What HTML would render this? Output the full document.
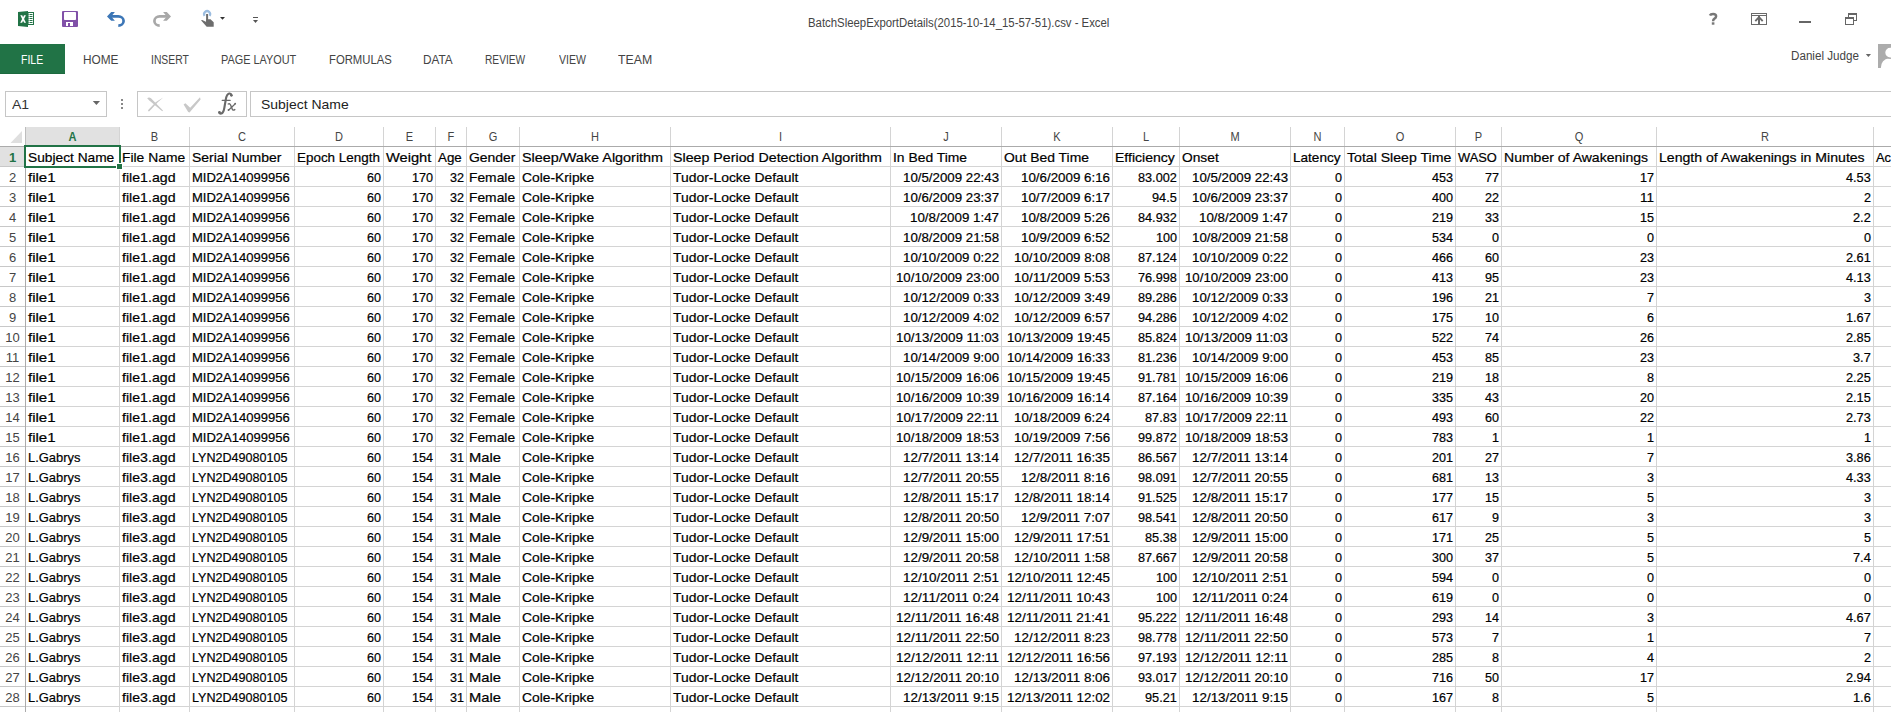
<!DOCTYPE html><html><head><meta charset="utf-8"><style>
*{margin:0;padding:0;box-sizing:border-box}
html,body{width:1891px;height:712px;overflow:hidden;background:#fff}
body{position:relative;font-family:"Liberation Sans",sans-serif;color:#000}
.a{position:absolute}
.t{position:absolute;white-space:nowrap;transform-origin:0 0}
.c{position:absolute;white-space:nowrap;font-size:13px;line-height:20px;height:20px;color:#000;transform-origin:0 0;-webkit-text-stroke:0.2px #000}
.r{text-align:right}
.v{position:absolute;width:1px;background:#d4d4d4}
.h{position:absolute;height:1px;background:#d4d4d4}
.ch{position:absolute;top:127px;height:19px;line-height:19px;text-align:center;font-size:13px;color:#444;transform:scaleX(0.85)}
.rn{position:absolute;left:0;width:25px;height:20px;line-height:20px;text-align:center;font-size:13px;color:#444}
.tab{position:absolute;top:53px;font-size:12px;line-height:14px;color:#444;white-space:nowrap;transform-origin:0 0}

</style></head><body>
<svg class="a" style="left:14px;top:6px" width="24" height="24" viewBox="0 0 24 24">
<rect x="14" y="6.5" width="5.5" height="12" fill="#fff" stroke="#217346" stroke-width="1"/>
<g fill="#217346"><rect x="15.5" y="8" width="3" height="1"/><rect x="15.5" y="10" width="3" height="1"/><rect x="15.5" y="12" width="3" height="1"/><rect x="15.5" y="14" width="3" height="1"/><rect x="15.5" y="16" width="3" height="1"/>
<rect x="13.5" y="8" width="1" height="1"/><rect x="13.5" y="10" width="1" height="1"/><rect x="13.5" y="12" width="1" height="1"/><rect x="13.5" y="14" width="1" height="1"/><rect x="13.5" y="16" width="1" height="1"/></g>
<path d="M4 6 L14 5 L14 21 L4 20 Z" fill="#217346"/>
<path d="M6.3 9.2 H8.2 L9.1 11.2 L10 9.2 H11.9 L10.1 12.9 L12 16.8 H10.1 L9.1 14.7 L8.1 16.8 H6.2 L8.1 12.9 Z" fill="#fff"/>
</svg>
<svg class="a" style="left:58px;top:6px" width="24" height="24" viewBox="0 0 24 24">
<path d="M4.5 5 H19 Q20 5 20 6 V20 Q20 21 19 21 H5 Q4 21 4 20 V6 Q4 5 5 5 Z" fill="#8151a8"/>
<rect x="6" y="6" width="12" height="8" rx="0.8" fill="#fff"/>
<path d="M8 16 H15 V20 H12 V17 H10 V20 H8 Z" fill="#fff"/>
</svg>
<svg class="a" style="left:104px;top:6px" width="24" height="24" viewBox="0 0 24 24">
<path d="M5.5 10.4 H14.3 A5.3 4.6 0 0 1 14.3 19.6" fill="none" stroke="#3d77b7" stroke-width="2.7"/>
<path d="M3 10.4 L7.2 6 H10.9 L7.2 10.4 L10.9 14.8 H7.2 Z" fill="#3d77b7"/>
</svg>
<svg class="a" style="left:150px;top:6px" width="24" height="24" viewBox="0 0 24 24"><g transform="translate(24,0) scale(-1,1)">
<path d="M5.5 10.4 H14.3 A5.3 4.6 0 0 1 14.3 19.6" fill="none" stroke="#a8a8a8" stroke-width="2.7"/>
<path d="M3 10.4 L7.2 6 H10.9 L7.2 10.4 L10.9 14.8 H7.2 Z" fill="#a8a8a8"/>
</g></svg>
<svg class="a" style="left:196px;top:6px" width="36" height="24" viewBox="0 0 36 24">
<path d="M8.6 9.8 A3 3 0 1 1 13.6 9.8" fill="none" stroke="#9cbde0" stroke-width="2.2"/>
<rect x="10.1" y="8" width="2" height="9" fill="#6d6d6d"/>
<path d="M5 14.3 L6.2 14 L10.4 16 V13.2 H14.5 L17.7 16.2 V20.7 H10.7 Z" fill="#6d6d6d"/>
<path d="M24 11 H29 L26.5 13.8 Z" fill="#333"/>
</svg>
<svg class="a" style="left:246px;top:10px" width="18" height="18" viewBox="0 0 18 18">
<rect x="7" y="7" width="5" height="1" fill="#555"/>
<path d="M7 10 H12 L9.5 13 Z" fill="#555"/>
</svg>
<div class="t" style="left:808.40px;top:15px;font-size:12px;line-height:17px;color:#444;transform:scaleX(0.9473);">BatchSleepExportDetails(2015-10-14_15-57-51).csv - Excel</div>
<svg class="a" style="left:1700px;top:6px" width="30" height="24" viewBox="0 0 30 24">
<path d="M9.9 9.6 Q10.6 8 13.1 8 Q16.1 8 16.1 10.3 Q16.1 11.8 14.5 12.7 Q13.1 13.5 13.1 15.2" fill="none" stroke="#777" stroke-width="2.5"/>
<rect x="11.8" y="16.3" width="2.6" height="2.4" fill="#777"/>
</svg>
<svg class="a" style="left:1746px;top:6px" width="30" height="24" viewBox="0 0 30 24">
<rect x="5.5" y="7.5" width="15" height="11" fill="none" stroke="#6a6a6a" stroke-width="1"/>
<rect x="5" y="9" width="16" height="1" fill="#6a6a6a"/>
<rect x="12" y="10" width="2" height="9" fill="#6a6a6a"/>
<path d="M9.3 15.1 L13 11.2 L16.7 15.1" fill="none" stroke="#6a6a6a" stroke-width="1.9"/>
</svg>
<div class="a" style="left:1799px;top:21px;width:12px;height:2px;background:#666"></div>
<div class="a" style="left:1848px;top:13px;width:9px;height:8px;border:1px solid #666;border-top:2px solid #666"></div>
<div class="a" style="left:1845px;top:17px;width:9px;height:8px;background:#fff;border:1px solid #666;border-top:2px solid #666"></div>
<div class="a" style="left:0;top:44px;width:65px;height:30px;background:#217346;border-bottom:1px solid #1d6a3f"></div>
<div class="t" style="left:21.00px;top:53px;font-size:12px;line-height:14px;color:#fff;transform:scaleX(0.8741);">FILE</div>
<div class="t" style="left:83.40px;top:53px;font-size:12px;line-height:14px;color:#444;transform:scaleX(0.9863);">HOME</div>
<div class="t" style="left:151.00px;top:53px;font-size:12px;line-height:14px;color:#444;transform:scaleX(0.8643);">INSERT</div>
<div class="t" style="left:221.40px;top:53px;font-size:12px;line-height:14px;color:#444;transform:scaleX(0.9073);">PAGE LAYOUT</div>
<div class="t" style="left:328.80px;top:53px;font-size:12px;line-height:14px;color:#444;transform:scaleX(0.9422);">FORMULAS</div>
<div class="t" style="left:423.40px;top:53px;font-size:12px;line-height:14px;color:#444;transform:scaleX(0.9830);">DATA</div>
<div class="t" style="left:485.40px;top:53px;font-size:12px;line-height:14px;color:#444;transform:scaleX(0.8496);">REVIEW</div>
<div class="t" style="left:559.40px;top:53px;font-size:12px;line-height:14px;color:#444;transform:scaleX(0.8795);">VIEW</div>
<div class="t" style="left:617.60px;top:53px;font-size:12px;line-height:14px;color:#444;transform:scaleX(1.0259);">TEAM</div>
<div class="t" style="left:1791.00px;top:49px;font-size:12px;line-height:14px;color:#444;transform:scaleX(0.9709);">Daniel Judge</div>
<svg class="a" style="left:1864px;top:52px" width="9" height="8" viewBox="0 0 9 8"><path d="M1.8 2 H7 L4.4 5 Z" fill="#666"/></svg>
<svg class="a" style="left:1878px;top:44px" width="13" height="24" viewBox="0 0 13 24">
<rect x="0" y="0" width="13" height="24" fill="#acacac"/>
<path d="M2.8 24 Q3.2 15.2 11 14.2 H13 V24 Z" fill="#fff"/>
<circle cx="12.2" cy="8.6" r="5.6" fill="#fff" stroke="#acacac" stroke-width="1.4"/>
</svg>
<div class="a" style="left:5px;top:91px;width:102px;height:26px;border:1px solid #c6c6c6"></div>
<div class="t" style="left:12.20px;top:96px;font-size:13px;line-height:17px;color:#333;transform:scaleX(1.0761);">A1</div>
<svg class="a" style="left:90px;top:98px" width="12" height="10" viewBox="0 0 12 10"><path d="M2.8 3 H10 L6.4 7 Z" fill="#666"/></svg>
<div class="a" style="left:121px;top:99px;width:2px;height:2px;background:#888"></div><div class="a" style="left:121px;top:103px;width:2px;height:2px;background:#888"></div><div class="a" style="left:121px;top:107px;width:2px;height:2px;background:#888"></div>
<div class="a" style="left:137px;top:91px;width:110px;height:26px;border:1px solid #c6c6c6"></div>
<svg class="a" style="left:137px;top:91px" width="110" height="26" viewBox="0 0 110 26">
<path d="M10.2 7.2 Q12 5.6 14 7.3 L25.7 19.2 L26 20.3 L24.6 19.8 L12.3 9.6 Z" fill="#c8c8c8"/>
<path d="M26.3 6.6 Q19 10.5 16.5 13.5 L11.2 19 Q10.6 20.3 12 20.4 Q14 18.9 17.5 14.8 Q21 10.8 26.3 6.6 Z" fill="#c8c8c8"/>
<path d="M46.6 13.5 L48.4 12.2 L53.2 16.8 L63 6.3 L63.6 8.4 L53.4 20.5 L52.6 21.6 L51.2 21 Z" fill="#c8c8c8"/>
</svg>
<svg class="a" style="left:210px;top:90px" width="36" height="28" viewBox="0 0 36 28">
<g fill="none" stroke="#6a6a6a" stroke-linecap="round">
<path d="M21.6 5.4 Q21.2 3.3 19.2 3.6 Q16.7 4.2 15.8 9.5 L14.3 18 Q13.5 22.8 11.3 23.6 Q9.8 24 9.3 22.6" stroke-width="2.1"/>
<path d="M12.2 10.4 H20.2" stroke-width="1.1"/>
<path d="M18.2 14 Q19.8 13 20.7 15.2 L22.3 19.2 Q23 20.9 24.8 19.6" stroke-width="1.4"/>
<path d="M25.3 13.7 L18.5 20.2" stroke-width="1.2"/>
</g>
<circle cx="21.3" cy="5.3" r="1.3" fill="#6a6a6a"/><circle cx="9.5" cy="22.4" r="1.3" fill="#6a6a6a"/>
<circle cx="25.2" cy="13.6" r="0.9" fill="#6a6a6a"/><circle cx="18.5" cy="20" r="0.9" fill="#6a6a6a"/>
</svg>
<div class="a" style="left:250px;top:91px;width:1700px;height:26px;border:1px solid #c6c6c6"></div>
<div class="t" style="left:261.00px;top:95px;font-size:13px;line-height:20px;color:#222;transform:scaleX(1.0735);">Subject Name</div>
<svg class="a" style="left:0;top:127px" width="25" height="19" viewBox="0 0 25 19"><path d="M10.5 16 L22 4 V16 Z" fill="#dfdfdf"/></svg>
<div class="a" style="left:26px;top:127px;width:93px;height:19px;background:#e1e1e1"></div>
<div class="a" style="left:0;top:147px;width:25px;height:19px;background:#e1e1e1"></div>
<div class="v" style="left:119px;top:127px;height:585px"></div>
<div class="v" style="left:189px;top:127px;height:585px"></div>
<div class="v" style="left:294px;top:127px;height:585px"></div>
<div class="v" style="left:383px;top:127px;height:585px"></div>
<div class="v" style="left:435px;top:127px;height:585px"></div>
<div class="v" style="left:466px;top:127px;height:585px"></div>
<div class="v" style="left:519px;top:127px;height:585px"></div>
<div class="v" style="left:670px;top:127px;height:585px"></div>
<div class="v" style="left:890px;top:127px;height:585px"></div>
<div class="v" style="left:1001px;top:127px;height:585px"></div>
<div class="v" style="left:1112px;top:127px;height:585px"></div>
<div class="v" style="left:1179px;top:127px;height:585px"></div>
<div class="v" style="left:1290px;top:127px;height:585px"></div>
<div class="v" style="left:1344px;top:127px;height:585px"></div>
<div class="v" style="left:1455px;top:127px;height:585px"></div>
<div class="v" style="left:1501px;top:127px;height:585px"></div>
<div class="v" style="left:1656px;top:127px;height:585px"></div>
<div class="v" style="left:1873px;top:127px;height:585px"></div>
<div class="h" style="left:26px;top:166px;width:1865px"></div>
<div class="h" style="left:0;top:166px;width:25px;background:#c8c8c8"></div>
<div class="h" style="left:26px;top:186px;width:1865px"></div>
<div class="h" style="left:0;top:186px;width:25px;background:#c8c8c8"></div>
<div class="h" style="left:26px;top:206px;width:1865px"></div>
<div class="h" style="left:0;top:206px;width:25px;background:#c8c8c8"></div>
<div class="h" style="left:26px;top:226px;width:1865px"></div>
<div class="h" style="left:0;top:226px;width:25px;background:#c8c8c8"></div>
<div class="h" style="left:26px;top:246px;width:1865px"></div>
<div class="h" style="left:0;top:246px;width:25px;background:#c8c8c8"></div>
<div class="h" style="left:26px;top:266px;width:1865px"></div>
<div class="h" style="left:0;top:266px;width:25px;background:#c8c8c8"></div>
<div class="h" style="left:26px;top:286px;width:1865px"></div>
<div class="h" style="left:0;top:286px;width:25px;background:#c8c8c8"></div>
<div class="h" style="left:26px;top:306px;width:1865px"></div>
<div class="h" style="left:0;top:306px;width:25px;background:#c8c8c8"></div>
<div class="h" style="left:26px;top:326px;width:1865px"></div>
<div class="h" style="left:0;top:326px;width:25px;background:#c8c8c8"></div>
<div class="h" style="left:26px;top:346px;width:1865px"></div>
<div class="h" style="left:0;top:346px;width:25px;background:#c8c8c8"></div>
<div class="h" style="left:26px;top:366px;width:1865px"></div>
<div class="h" style="left:0;top:366px;width:25px;background:#c8c8c8"></div>
<div class="h" style="left:26px;top:386px;width:1865px"></div>
<div class="h" style="left:0;top:386px;width:25px;background:#c8c8c8"></div>
<div class="h" style="left:26px;top:406px;width:1865px"></div>
<div class="h" style="left:0;top:406px;width:25px;background:#c8c8c8"></div>
<div class="h" style="left:26px;top:426px;width:1865px"></div>
<div class="h" style="left:0;top:426px;width:25px;background:#c8c8c8"></div>
<div class="h" style="left:26px;top:446px;width:1865px"></div>
<div class="h" style="left:0;top:446px;width:25px;background:#c8c8c8"></div>
<div class="h" style="left:26px;top:466px;width:1865px"></div>
<div class="h" style="left:0;top:466px;width:25px;background:#c8c8c8"></div>
<div class="h" style="left:26px;top:486px;width:1865px"></div>
<div class="h" style="left:0;top:486px;width:25px;background:#c8c8c8"></div>
<div class="h" style="left:26px;top:506px;width:1865px"></div>
<div class="h" style="left:0;top:506px;width:25px;background:#c8c8c8"></div>
<div class="h" style="left:26px;top:526px;width:1865px"></div>
<div class="h" style="left:0;top:526px;width:25px;background:#c8c8c8"></div>
<div class="h" style="left:26px;top:546px;width:1865px"></div>
<div class="h" style="left:0;top:546px;width:25px;background:#c8c8c8"></div>
<div class="h" style="left:26px;top:566px;width:1865px"></div>
<div class="h" style="left:0;top:566px;width:25px;background:#c8c8c8"></div>
<div class="h" style="left:26px;top:586px;width:1865px"></div>
<div class="h" style="left:0;top:586px;width:25px;background:#c8c8c8"></div>
<div class="h" style="left:26px;top:606px;width:1865px"></div>
<div class="h" style="left:0;top:606px;width:25px;background:#c8c8c8"></div>
<div class="h" style="left:26px;top:626px;width:1865px"></div>
<div class="h" style="left:0;top:626px;width:25px;background:#c8c8c8"></div>
<div class="h" style="left:26px;top:646px;width:1865px"></div>
<div class="h" style="left:0;top:646px;width:25px;background:#c8c8c8"></div>
<div class="h" style="left:26px;top:666px;width:1865px"></div>
<div class="h" style="left:0;top:666px;width:25px;background:#c8c8c8"></div>
<div class="h" style="left:26px;top:686px;width:1865px"></div>
<div class="h" style="left:0;top:686px;width:25px;background:#c8c8c8"></div>
<div class="h" style="left:26px;top:706px;width:1865px"></div>
<div class="h" style="left:0;top:706px;width:25px;background:#c8c8c8"></div>
<div class="a" style="left:0;top:146px;width:1891px;height:1px;background:#ababab"></div>
<div class="a" style="left:25px;top:146px;width:1px;height:566px;background:#ababab"></div><div class="a" style="left:25px;top:127px;width:1px;height:19px;background:#bdbdbd"></div>
<div class="ch" style="left:26px;width:93px;color:#217346;font-weight:bold">A</div>
<div class="ch" style="left:120px;width:69px">B</div>
<div class="ch" style="left:190px;width:104px">C</div>
<div class="ch" style="left:295px;width:88px">D</div>
<div class="ch" style="left:384px;width:51px">E</div>
<div class="ch" style="left:436px;width:30px">F</div>
<div class="ch" style="left:467px;width:52px">G</div>
<div class="ch" style="left:520px;width:150px">H</div>
<div class="ch" style="left:671px;width:219px">I</div>
<div class="ch" style="left:891px;width:110px">J</div>
<div class="ch" style="left:1002px;width:110px">K</div>
<div class="ch" style="left:1113px;width:66px">L</div>
<div class="ch" style="left:1180px;width:110px">M</div>
<div class="ch" style="left:1291px;width:53px">N</div>
<div class="ch" style="left:1345px;width:110px">O</div>
<div class="ch" style="left:1456px;width:45px">P</div>
<div class="ch" style="left:1502px;width:154px">Q</div>
<div class="ch" style="left:1657px;width:216px">R</div>
<div class="rn" style="top:148px;color:#217346;font-weight:bold">1</div>
<div class="rn" style="top:168px">2</div>
<div class="rn" style="top:188px">3</div>
<div class="rn" style="top:208px">4</div>
<div class="rn" style="top:228px">5</div>
<div class="rn" style="top:248px">6</div>
<div class="rn" style="top:268px">7</div>
<div class="rn" style="top:288px">8</div>
<div class="rn" style="top:308px">9</div>
<div class="rn" style="top:328px">10</div>
<div class="rn" style="top:348px">11</div>
<div class="rn" style="top:368px">12</div>
<div class="rn" style="top:388px">13</div>
<div class="rn" style="top:408px">14</div>
<div class="rn" style="top:428px">15</div>
<div class="rn" style="top:448px">16</div>
<div class="rn" style="top:468px">17</div>
<div class="rn" style="top:488px">18</div>
<div class="rn" style="top:508px">19</div>
<div class="rn" style="top:528px">20</div>
<div class="rn" style="top:548px">21</div>
<div class="rn" style="top:568px">22</div>
<div class="rn" style="top:588px">23</div>
<div class="rn" style="top:608px">24</div>
<div class="rn" style="top:628px">25</div>
<div class="rn" style="top:648px">26</div>
<div class="rn" style="top:668px">27</div>
<div class="rn" style="top:688px">28</div>
<div class="rn" style="top:708px">29</div>
<div class="c" style="left:27.50px;top:148px;transform:scaleX(1.0565)">Subject Name</div>
<div class="c" style="left:121.50px;top:148px;transform:scaleX(1.0658)">File Name</div>
<div class="c" style="left:191.50px;top:148px;transform:scaleX(1.0755)">Serial Number</div>
<div class="c" style="left:296.50px;top:148px;transform:scaleX(1.0331)">Epoch Length</div>
<div class="c" style="left:385.50px;top:148px;transform:scaleX(1.1265)">Weight</div>
<div class="c" style="left:437.50px;top:148px;transform:scaleX(1.0264)">Age</div>
<div class="c" style="left:468.50px;top:148px;transform:scaleX(1.0714)">Gender</div>
<div class="c" style="left:521.50px;top:148px;transform:scaleX(1.1074)">Sleep/Wake Algorithm</div>
<div class="c" style="left:672.50px;top:148px;transform:scaleX(1.0950)">Sleep Period Detection Algorithm</div>
<div class="c" style="left:892.50px;top:148px;transform:scaleX(1.0668)">In Bed Time</div>
<div class="c" style="left:1003.50px;top:148px;transform:scaleX(1.0689)">Out Bed Time</div>
<div class="c" style="left:1114.50px;top:148px;transform:scaleX(1.0802)">Efficiency</div>
<div class="c" style="left:1181.50px;top:148px;transform:scaleX(1.0583)">Onset</div>
<div class="c" style="left:1292.50px;top:148px;transform:scaleX(1.0439)">Latency</div>
<div class="c" style="left:1346.50px;top:148px;transform:scaleX(1.0851)">Total Sleep Time</div>
<div class="c" style="left:1457.50px;top:148px;transform:scaleX(0.9899)">WASO</div>
<div class="c" style="left:1503.50px;top:148px;transform:scaleX(1.0793)">Number of Awakenings</div>
<div class="c" style="left:1658.50px;top:148px;transform:scaleX(1.0834)">Length of Awakenings in Minutes</div>
<div class="c" style="left:1875.50px;top:148px;transform:scaleX(0.9902)">Ac</div>
<div class="c" style="left:27.50px;top:168px;transform:scaleX(1.1564)">file1</div>
<div class="c" style="left:121.50px;top:168px;transform:scaleX(1.0884)">file1.agd</div>
<div class="c" style="left:191.50px;top:168px;transform:scaleX(1.0017)">MID2A14099956</div>
<div class="c" style="left:367.00px;top:168px;transform:scaleX(0.9683)">60</div>
<div class="c" style="left:412.00px;top:168px;transform:scaleX(0.9683)">170</div>
<div class="c" style="left:450.00px;top:168px;transform:scaleX(0.9683)">32</div>
<div class="c" style="left:468.50px;top:168px;transform:scaleX(1.0626)">Female</div>
<div class="c" style="left:521.50px;top:168px;transform:scaleX(1.0635)">Cole-Kripke</div>
<div class="c" style="left:672.50px;top:168px;transform:scaleX(1.0697)">Tudor-Locke Default</div>
<div class="c" style="left:902.98px;top:168px;transform:scaleX(1.0219)">10/5/2009 22:43</div>
<div class="c" style="left:1020.98px;top:168px;transform:scaleX(1.0263)">10/6/2009 6:16</div>
<div class="c" style="left:1138.21px;top:168px;transform:scaleX(0.9756)">83.002</div>
<div class="c" style="left:1191.98px;top:168px;transform:scaleX(1.0219)">10/5/2009 22:43</div>
<div class="c" style="left:1335.00px;top:168px;transform:scaleX(0.9683)">0</div>
<div class="c" style="left:1432.00px;top:168px;transform:scaleX(0.9683)">453</div>
<div class="c" style="left:1485.00px;top:168px;transform:scaleX(0.9683)">77</div>
<div class="c" style="left:1640.00px;top:168px;transform:scaleX(0.9683)">17</div>
<div class="c" style="left:1846.21px;top:168px;transform:scaleX(0.9797)">4.53</div>
<div class="c" style="left:27.50px;top:188px;transform:scaleX(1.1564)">file1</div>
<div class="c" style="left:121.50px;top:188px;transform:scaleX(1.0884)">file1.agd</div>
<div class="c" style="left:191.50px;top:188px;transform:scaleX(1.0017)">MID2A14099956</div>
<div class="c" style="left:367.00px;top:188px;transform:scaleX(0.9683)">60</div>
<div class="c" style="left:412.00px;top:188px;transform:scaleX(0.9683)">170</div>
<div class="c" style="left:450.00px;top:188px;transform:scaleX(0.9683)">32</div>
<div class="c" style="left:468.50px;top:188px;transform:scaleX(1.0626)">Female</div>
<div class="c" style="left:521.50px;top:188px;transform:scaleX(1.0635)">Cole-Kripke</div>
<div class="c" style="left:672.50px;top:188px;transform:scaleX(1.0697)">Tudor-Locke Default</div>
<div class="c" style="left:902.98px;top:188px;transform:scaleX(1.0219)">10/6/2009 23:37</div>
<div class="c" style="left:1020.98px;top:188px;transform:scaleX(1.0263)">10/7/2009 6:17</div>
<div class="c" style="left:1152.21px;top:188px;transform:scaleX(0.9797)">94.5</div>
<div class="c" style="left:1191.98px;top:188px;transform:scaleX(1.0219)">10/6/2009 23:37</div>
<div class="c" style="left:1335.00px;top:188px;transform:scaleX(0.9683)">0</div>
<div class="c" style="left:1432.00px;top:188px;transform:scaleX(0.9683)">400</div>
<div class="c" style="left:1485.00px;top:188px;transform:scaleX(0.9683)">22</div>
<div class="c" style="left:1640.00px;top:188px;transform:scaleX(1.0375)">11</div>
<div class="c" style="left:1864.00px;top:188px;transform:scaleX(0.9683)">2</div>
<div class="c" style="left:27.50px;top:208px;transform:scaleX(1.1564)">file1</div>
<div class="c" style="left:121.50px;top:208px;transform:scaleX(1.0884)">file1.agd</div>
<div class="c" style="left:191.50px;top:208px;transform:scaleX(1.0017)">MID2A14099956</div>
<div class="c" style="left:367.00px;top:208px;transform:scaleX(0.9683)">60</div>
<div class="c" style="left:412.00px;top:208px;transform:scaleX(0.9683)">170</div>
<div class="c" style="left:450.00px;top:208px;transform:scaleX(0.9683)">32</div>
<div class="c" style="left:468.50px;top:208px;transform:scaleX(1.0626)">Female</div>
<div class="c" style="left:521.50px;top:208px;transform:scaleX(1.0635)">Cole-Kripke</div>
<div class="c" style="left:672.50px;top:208px;transform:scaleX(1.0697)">Tudor-Locke Default</div>
<div class="c" style="left:909.98px;top:208px;transform:scaleX(1.0263)">10/8/2009 1:47</div>
<div class="c" style="left:1020.98px;top:208px;transform:scaleX(1.0263)">10/8/2009 5:26</div>
<div class="c" style="left:1138.21px;top:208px;transform:scaleX(0.9756)">84.932</div>
<div class="c" style="left:1198.98px;top:208px;transform:scaleX(1.0263)">10/8/2009 1:47</div>
<div class="c" style="left:1335.00px;top:208px;transform:scaleX(0.9683)">0</div>
<div class="c" style="left:1432.00px;top:208px;transform:scaleX(0.9683)">219</div>
<div class="c" style="left:1485.00px;top:208px;transform:scaleX(0.9683)">33</div>
<div class="c" style="left:1640.00px;top:208px;transform:scaleX(0.9683)">15</div>
<div class="c" style="left:1853.21px;top:208px;transform:scaleX(0.9843)">2.2</div>
<div class="c" style="left:27.50px;top:228px;transform:scaleX(1.1564)">file1</div>
<div class="c" style="left:121.50px;top:228px;transform:scaleX(1.0884)">file1.agd</div>
<div class="c" style="left:191.50px;top:228px;transform:scaleX(1.0017)">MID2A14099956</div>
<div class="c" style="left:367.00px;top:228px;transform:scaleX(0.9683)">60</div>
<div class="c" style="left:412.00px;top:228px;transform:scaleX(0.9683)">170</div>
<div class="c" style="left:450.00px;top:228px;transform:scaleX(0.9683)">32</div>
<div class="c" style="left:468.50px;top:228px;transform:scaleX(1.0626)">Female</div>
<div class="c" style="left:521.50px;top:228px;transform:scaleX(1.0635)">Cole-Kripke</div>
<div class="c" style="left:672.50px;top:228px;transform:scaleX(1.0697)">Tudor-Locke Default</div>
<div class="c" style="left:902.98px;top:228px;transform:scaleX(1.0219)">10/8/2009 21:58</div>
<div class="c" style="left:1020.98px;top:228px;transform:scaleX(1.0263)">10/9/2009 6:52</div>
<div class="c" style="left:1156.00px;top:228px;transform:scaleX(0.9683)">100</div>
<div class="c" style="left:1191.98px;top:228px;transform:scaleX(1.0219)">10/8/2009 21:58</div>
<div class="c" style="left:1335.00px;top:228px;transform:scaleX(0.9683)">0</div>
<div class="c" style="left:1432.00px;top:228px;transform:scaleX(0.9683)">534</div>
<div class="c" style="left:1492.00px;top:228px;transform:scaleX(0.9683)">0</div>
<div class="c" style="left:1647.00px;top:228px;transform:scaleX(0.9683)">0</div>
<div class="c" style="left:1864.00px;top:228px;transform:scaleX(0.9683)">0</div>
<div class="c" style="left:27.50px;top:248px;transform:scaleX(1.1564)">file1</div>
<div class="c" style="left:121.50px;top:248px;transform:scaleX(1.0884)">file1.agd</div>
<div class="c" style="left:191.50px;top:248px;transform:scaleX(1.0017)">MID2A14099956</div>
<div class="c" style="left:367.00px;top:248px;transform:scaleX(0.9683)">60</div>
<div class="c" style="left:412.00px;top:248px;transform:scaleX(0.9683)">170</div>
<div class="c" style="left:450.00px;top:248px;transform:scaleX(0.9683)">32</div>
<div class="c" style="left:468.50px;top:248px;transform:scaleX(1.0626)">Female</div>
<div class="c" style="left:521.50px;top:248px;transform:scaleX(1.0635)">Cole-Kripke</div>
<div class="c" style="left:672.50px;top:248px;transform:scaleX(1.0697)">Tudor-Locke Default</div>
<div class="c" style="left:902.98px;top:248px;transform:scaleX(1.0219)">10/10/2009 0:22</div>
<div class="c" style="left:1013.98px;top:248px;transform:scaleX(1.0219)">10/10/2009 8:08</div>
<div class="c" style="left:1138.21px;top:248px;transform:scaleX(0.9756)">87.124</div>
<div class="c" style="left:1191.98px;top:248px;transform:scaleX(1.0219)">10/10/2009 0:22</div>
<div class="c" style="left:1335.00px;top:248px;transform:scaleX(0.9683)">0</div>
<div class="c" style="left:1432.00px;top:248px;transform:scaleX(0.9683)">466</div>
<div class="c" style="left:1485.00px;top:248px;transform:scaleX(0.9683)">60</div>
<div class="c" style="left:1640.00px;top:248px;transform:scaleX(0.9683)">23</div>
<div class="c" style="left:1846.21px;top:248px;transform:scaleX(0.9797)">2.61</div>
<div class="c" style="left:27.50px;top:268px;transform:scaleX(1.1564)">file1</div>
<div class="c" style="left:121.50px;top:268px;transform:scaleX(1.0884)">file1.agd</div>
<div class="c" style="left:191.50px;top:268px;transform:scaleX(1.0017)">MID2A14099956</div>
<div class="c" style="left:367.00px;top:268px;transform:scaleX(0.9683)">60</div>
<div class="c" style="left:412.00px;top:268px;transform:scaleX(0.9683)">170</div>
<div class="c" style="left:450.00px;top:268px;transform:scaleX(0.9683)">32</div>
<div class="c" style="left:468.50px;top:268px;transform:scaleX(1.0626)">Female</div>
<div class="c" style="left:521.50px;top:268px;transform:scaleX(1.0635)">Cole-Kripke</div>
<div class="c" style="left:672.50px;top:268px;transform:scaleX(1.0697)">Tudor-Locke Default</div>
<div class="c" style="left:895.98px;top:268px;transform:scaleX(1.0180)">10/10/2009 23:00</div>
<div class="c" style="left:1013.98px;top:268px;transform:scaleX(1.0325)">10/11/2009 5:53</div>
<div class="c" style="left:1138.21px;top:268px;transform:scaleX(0.9756)">76.998</div>
<div class="c" style="left:1184.98px;top:268px;transform:scaleX(1.0180)">10/10/2009 23:00</div>
<div class="c" style="left:1335.00px;top:268px;transform:scaleX(0.9683)">0</div>
<div class="c" style="left:1432.00px;top:268px;transform:scaleX(0.9683)">413</div>
<div class="c" style="left:1485.00px;top:268px;transform:scaleX(0.9683)">95</div>
<div class="c" style="left:1640.00px;top:268px;transform:scaleX(0.9683)">23</div>
<div class="c" style="left:1846.21px;top:268px;transform:scaleX(0.9797)">4.13</div>
<div class="c" style="left:27.50px;top:288px;transform:scaleX(1.1564)">file1</div>
<div class="c" style="left:121.50px;top:288px;transform:scaleX(1.0884)">file1.agd</div>
<div class="c" style="left:191.50px;top:288px;transform:scaleX(1.0017)">MID2A14099956</div>
<div class="c" style="left:367.00px;top:288px;transform:scaleX(0.9683)">60</div>
<div class="c" style="left:412.00px;top:288px;transform:scaleX(0.9683)">170</div>
<div class="c" style="left:450.00px;top:288px;transform:scaleX(0.9683)">32</div>
<div class="c" style="left:468.50px;top:288px;transform:scaleX(1.0626)">Female</div>
<div class="c" style="left:521.50px;top:288px;transform:scaleX(1.0635)">Cole-Kripke</div>
<div class="c" style="left:672.50px;top:288px;transform:scaleX(1.0697)">Tudor-Locke Default</div>
<div class="c" style="left:902.98px;top:288px;transform:scaleX(1.0219)">10/12/2009 0:33</div>
<div class="c" style="left:1013.98px;top:288px;transform:scaleX(1.0219)">10/12/2009 3:49</div>
<div class="c" style="left:1138.21px;top:288px;transform:scaleX(0.9756)">89.286</div>
<div class="c" style="left:1191.98px;top:288px;transform:scaleX(1.0219)">10/12/2009 0:33</div>
<div class="c" style="left:1335.00px;top:288px;transform:scaleX(0.9683)">0</div>
<div class="c" style="left:1432.00px;top:288px;transform:scaleX(0.9683)">196</div>
<div class="c" style="left:1485.00px;top:288px;transform:scaleX(0.9683)">21</div>
<div class="c" style="left:1647.00px;top:288px;transform:scaleX(0.9683)">7</div>
<div class="c" style="left:1864.00px;top:288px;transform:scaleX(0.9683)">3</div>
<div class="c" style="left:27.50px;top:308px;transform:scaleX(1.1564)">file1</div>
<div class="c" style="left:121.50px;top:308px;transform:scaleX(1.0884)">file1.agd</div>
<div class="c" style="left:191.50px;top:308px;transform:scaleX(1.0017)">MID2A14099956</div>
<div class="c" style="left:367.00px;top:308px;transform:scaleX(0.9683)">60</div>
<div class="c" style="left:412.00px;top:308px;transform:scaleX(0.9683)">170</div>
<div class="c" style="left:450.00px;top:308px;transform:scaleX(0.9683)">32</div>
<div class="c" style="left:468.50px;top:308px;transform:scaleX(1.0626)">Female</div>
<div class="c" style="left:521.50px;top:308px;transform:scaleX(1.0635)">Cole-Kripke</div>
<div class="c" style="left:672.50px;top:308px;transform:scaleX(1.0697)">Tudor-Locke Default</div>
<div class="c" style="left:902.98px;top:308px;transform:scaleX(1.0219)">10/12/2009 4:02</div>
<div class="c" style="left:1013.98px;top:308px;transform:scaleX(1.0219)">10/12/2009 6:57</div>
<div class="c" style="left:1138.21px;top:308px;transform:scaleX(0.9756)">94.286</div>
<div class="c" style="left:1191.98px;top:308px;transform:scaleX(1.0219)">10/12/2009 4:02</div>
<div class="c" style="left:1335.00px;top:308px;transform:scaleX(0.9683)">0</div>
<div class="c" style="left:1432.00px;top:308px;transform:scaleX(0.9683)">175</div>
<div class="c" style="left:1485.00px;top:308px;transform:scaleX(0.9683)">10</div>
<div class="c" style="left:1647.00px;top:308px;transform:scaleX(0.9683)">6</div>
<div class="c" style="left:1846.21px;top:308px;transform:scaleX(0.9797)">1.67</div>
<div class="c" style="left:27.50px;top:328px;transform:scaleX(1.1564)">file1</div>
<div class="c" style="left:121.50px;top:328px;transform:scaleX(1.0884)">file1.agd</div>
<div class="c" style="left:191.50px;top:328px;transform:scaleX(1.0017)">MID2A14099956</div>
<div class="c" style="left:367.00px;top:328px;transform:scaleX(0.9683)">60</div>
<div class="c" style="left:412.00px;top:328px;transform:scaleX(0.9683)">170</div>
<div class="c" style="left:450.00px;top:328px;transform:scaleX(0.9683)">32</div>
<div class="c" style="left:468.50px;top:328px;transform:scaleX(1.0626)">Female</div>
<div class="c" style="left:521.50px;top:328px;transform:scaleX(1.0635)">Cole-Kripke</div>
<div class="c" style="left:672.50px;top:328px;transform:scaleX(1.0697)">Tudor-Locke Default</div>
<div class="c" style="left:895.98px;top:328px;transform:scaleX(1.0278)">10/13/2009 11:03</div>
<div class="c" style="left:1006.98px;top:328px;transform:scaleX(1.0180)">10/13/2009 19:45</div>
<div class="c" style="left:1138.21px;top:328px;transform:scaleX(0.9756)">85.824</div>
<div class="c" style="left:1184.98px;top:328px;transform:scaleX(1.0278)">10/13/2009 11:03</div>
<div class="c" style="left:1335.00px;top:328px;transform:scaleX(0.9683)">0</div>
<div class="c" style="left:1432.00px;top:328px;transform:scaleX(0.9683)">522</div>
<div class="c" style="left:1485.00px;top:328px;transform:scaleX(0.9683)">74</div>
<div class="c" style="left:1640.00px;top:328px;transform:scaleX(0.9683)">26</div>
<div class="c" style="left:1846.21px;top:328px;transform:scaleX(0.9797)">2.85</div>
<div class="c" style="left:27.50px;top:348px;transform:scaleX(1.1564)">file1</div>
<div class="c" style="left:121.50px;top:348px;transform:scaleX(1.0884)">file1.agd</div>
<div class="c" style="left:191.50px;top:348px;transform:scaleX(1.0017)">MID2A14099956</div>
<div class="c" style="left:367.00px;top:348px;transform:scaleX(0.9683)">60</div>
<div class="c" style="left:412.00px;top:348px;transform:scaleX(0.9683)">170</div>
<div class="c" style="left:450.00px;top:348px;transform:scaleX(0.9683)">32</div>
<div class="c" style="left:468.50px;top:348px;transform:scaleX(1.0626)">Female</div>
<div class="c" style="left:521.50px;top:348px;transform:scaleX(1.0635)">Cole-Kripke</div>
<div class="c" style="left:672.50px;top:348px;transform:scaleX(1.0697)">Tudor-Locke Default</div>
<div class="c" style="left:902.98px;top:348px;transform:scaleX(1.0219)">10/14/2009 9:00</div>
<div class="c" style="left:1006.98px;top:348px;transform:scaleX(1.0180)">10/14/2009 16:33</div>
<div class="c" style="left:1138.21px;top:348px;transform:scaleX(0.9756)">81.236</div>
<div class="c" style="left:1191.98px;top:348px;transform:scaleX(1.0219)">10/14/2009 9:00</div>
<div class="c" style="left:1335.00px;top:348px;transform:scaleX(0.9683)">0</div>
<div class="c" style="left:1432.00px;top:348px;transform:scaleX(0.9683)">453</div>
<div class="c" style="left:1485.00px;top:348px;transform:scaleX(0.9683)">85</div>
<div class="c" style="left:1640.00px;top:348px;transform:scaleX(0.9683)">23</div>
<div class="c" style="left:1853.21px;top:348px;transform:scaleX(0.9843)">3.7</div>
<div class="c" style="left:27.50px;top:368px;transform:scaleX(1.1564)">file1</div>
<div class="c" style="left:121.50px;top:368px;transform:scaleX(1.0884)">file1.agd</div>
<div class="c" style="left:191.50px;top:368px;transform:scaleX(1.0017)">MID2A14099956</div>
<div class="c" style="left:367.00px;top:368px;transform:scaleX(0.9683)">60</div>
<div class="c" style="left:412.00px;top:368px;transform:scaleX(0.9683)">170</div>
<div class="c" style="left:450.00px;top:368px;transform:scaleX(0.9683)">32</div>
<div class="c" style="left:468.50px;top:368px;transform:scaleX(1.0626)">Female</div>
<div class="c" style="left:521.50px;top:368px;transform:scaleX(1.0635)">Cole-Kripke</div>
<div class="c" style="left:672.50px;top:368px;transform:scaleX(1.0697)">Tudor-Locke Default</div>
<div class="c" style="left:895.98px;top:368px;transform:scaleX(1.0180)">10/15/2009 16:06</div>
<div class="c" style="left:1006.98px;top:368px;transform:scaleX(1.0180)">10/15/2009 19:45</div>
<div class="c" style="left:1138.21px;top:368px;transform:scaleX(0.9756)">91.781</div>
<div class="c" style="left:1184.98px;top:368px;transform:scaleX(1.0180)">10/15/2009 16:06</div>
<div class="c" style="left:1335.00px;top:368px;transform:scaleX(0.9683)">0</div>
<div class="c" style="left:1432.00px;top:368px;transform:scaleX(0.9683)">219</div>
<div class="c" style="left:1485.00px;top:368px;transform:scaleX(0.9683)">18</div>
<div class="c" style="left:1647.00px;top:368px;transform:scaleX(0.9683)">8</div>
<div class="c" style="left:1846.21px;top:368px;transform:scaleX(0.9797)">2.25</div>
<div class="c" style="left:27.50px;top:388px;transform:scaleX(1.1564)">file1</div>
<div class="c" style="left:121.50px;top:388px;transform:scaleX(1.0884)">file1.agd</div>
<div class="c" style="left:191.50px;top:388px;transform:scaleX(1.0017)">MID2A14099956</div>
<div class="c" style="left:367.00px;top:388px;transform:scaleX(0.9683)">60</div>
<div class="c" style="left:412.00px;top:388px;transform:scaleX(0.9683)">170</div>
<div class="c" style="left:450.00px;top:388px;transform:scaleX(0.9683)">32</div>
<div class="c" style="left:468.50px;top:388px;transform:scaleX(1.0626)">Female</div>
<div class="c" style="left:521.50px;top:388px;transform:scaleX(1.0635)">Cole-Kripke</div>
<div class="c" style="left:672.50px;top:388px;transform:scaleX(1.0697)">Tudor-Locke Default</div>
<div class="c" style="left:895.98px;top:388px;transform:scaleX(1.0180)">10/16/2009 10:39</div>
<div class="c" style="left:1006.98px;top:388px;transform:scaleX(1.0180)">10/16/2009 16:14</div>
<div class="c" style="left:1138.21px;top:388px;transform:scaleX(0.9756)">87.164</div>
<div class="c" style="left:1184.98px;top:388px;transform:scaleX(1.0180)">10/16/2009 10:39</div>
<div class="c" style="left:1335.00px;top:388px;transform:scaleX(0.9683)">0</div>
<div class="c" style="left:1432.00px;top:388px;transform:scaleX(0.9683)">335</div>
<div class="c" style="left:1485.00px;top:388px;transform:scaleX(0.9683)">43</div>
<div class="c" style="left:1640.00px;top:388px;transform:scaleX(0.9683)">20</div>
<div class="c" style="left:1846.21px;top:388px;transform:scaleX(0.9797)">2.15</div>
<div class="c" style="left:27.50px;top:408px;transform:scaleX(1.1564)">file1</div>
<div class="c" style="left:121.50px;top:408px;transform:scaleX(1.0884)">file1.agd</div>
<div class="c" style="left:191.50px;top:408px;transform:scaleX(1.0017)">MID2A14099956</div>
<div class="c" style="left:367.00px;top:408px;transform:scaleX(0.9683)">60</div>
<div class="c" style="left:412.00px;top:408px;transform:scaleX(0.9683)">170</div>
<div class="c" style="left:450.00px;top:408px;transform:scaleX(0.9683)">32</div>
<div class="c" style="left:468.50px;top:408px;transform:scaleX(1.0626)">Female</div>
<div class="c" style="left:521.50px;top:408px;transform:scaleX(1.0635)">Cole-Kripke</div>
<div class="c" style="left:672.50px;top:408px;transform:scaleX(1.0697)">Tudor-Locke Default</div>
<div class="c" style="left:895.98px;top:408px;transform:scaleX(1.0278)">10/17/2009 22:11</div>
<div class="c" style="left:1013.98px;top:408px;transform:scaleX(1.0219)">10/18/2009 6:24</div>
<div class="c" style="left:1145.21px;top:408px;transform:scaleX(0.9772)">87.83</div>
<div class="c" style="left:1184.98px;top:408px;transform:scaleX(1.0278)">10/17/2009 22:11</div>
<div class="c" style="left:1335.00px;top:408px;transform:scaleX(0.9683)">0</div>
<div class="c" style="left:1432.00px;top:408px;transform:scaleX(0.9683)">493</div>
<div class="c" style="left:1485.00px;top:408px;transform:scaleX(0.9683)">60</div>
<div class="c" style="left:1640.00px;top:408px;transform:scaleX(0.9683)">22</div>
<div class="c" style="left:1846.21px;top:408px;transform:scaleX(0.9797)">2.73</div>
<div class="c" style="left:27.50px;top:428px;transform:scaleX(1.1564)">file1</div>
<div class="c" style="left:121.50px;top:428px;transform:scaleX(1.0884)">file1.agd</div>
<div class="c" style="left:191.50px;top:428px;transform:scaleX(1.0017)">MID2A14099956</div>
<div class="c" style="left:367.00px;top:428px;transform:scaleX(0.9683)">60</div>
<div class="c" style="left:412.00px;top:428px;transform:scaleX(0.9683)">170</div>
<div class="c" style="left:450.00px;top:428px;transform:scaleX(0.9683)">32</div>
<div class="c" style="left:468.50px;top:428px;transform:scaleX(1.0626)">Female</div>
<div class="c" style="left:521.50px;top:428px;transform:scaleX(1.0635)">Cole-Kripke</div>
<div class="c" style="left:672.50px;top:428px;transform:scaleX(1.0697)">Tudor-Locke Default</div>
<div class="c" style="left:895.98px;top:428px;transform:scaleX(1.0180)">10/18/2009 18:53</div>
<div class="c" style="left:1013.98px;top:428px;transform:scaleX(1.0219)">10/19/2009 7:56</div>
<div class="c" style="left:1138.21px;top:428px;transform:scaleX(0.9756)">99.872</div>
<div class="c" style="left:1184.98px;top:428px;transform:scaleX(1.0180)">10/18/2009 18:53</div>
<div class="c" style="left:1335.00px;top:428px;transform:scaleX(0.9683)">0</div>
<div class="c" style="left:1432.00px;top:428px;transform:scaleX(0.9683)">783</div>
<div class="c" style="left:1492.00px;top:428px;transform:scaleX(0.9683)">1</div>
<div class="c" style="left:1647.00px;top:428px;transform:scaleX(0.9683)">1</div>
<div class="c" style="left:1864.00px;top:428px;transform:scaleX(0.9683)">1</div>
<div class="c" style="left:27.50px;top:448px;transform:scaleX(0.9956)">L.Gabrys</div>
<div class="c" style="left:121.50px;top:448px;transform:scaleX(1.0884)">file3.agd</div>
<div class="c" style="left:191.50px;top:448px;transform:scaleX(0.9671)">LYN2D49080105</div>
<div class="c" style="left:367.00px;top:448px;transform:scaleX(0.9683)">60</div>
<div class="c" style="left:412.00px;top:448px;transform:scaleX(0.9683)">154</div>
<div class="c" style="left:450.00px;top:448px;transform:scaleX(0.9683)">31</div>
<div class="c" style="left:468.50px;top:448px;transform:scaleX(1.1361)">Male</div>
<div class="c" style="left:521.50px;top:448px;transform:scaleX(1.0635)">Cole-Kripke</div>
<div class="c" style="left:672.50px;top:448px;transform:scaleX(1.0697)">Tudor-Locke Default</div>
<div class="c" style="left:902.98px;top:448px;transform:scaleX(1.0325)">12/7/2011 13:14</div>
<div class="c" style="left:1013.98px;top:448px;transform:scaleX(1.0325)">12/7/2011 16:35</div>
<div class="c" style="left:1138.21px;top:448px;transform:scaleX(0.9756)">86.567</div>
<div class="c" style="left:1191.98px;top:448px;transform:scaleX(1.0325)">12/7/2011 13:14</div>
<div class="c" style="left:1335.00px;top:448px;transform:scaleX(0.9683)">0</div>
<div class="c" style="left:1432.00px;top:448px;transform:scaleX(0.9683)">201</div>
<div class="c" style="left:1485.00px;top:448px;transform:scaleX(0.9683)">27</div>
<div class="c" style="left:1647.00px;top:448px;transform:scaleX(0.9683)">7</div>
<div class="c" style="left:1846.21px;top:448px;transform:scaleX(0.9797)">3.86</div>
<div class="c" style="left:27.50px;top:468px;transform:scaleX(0.9956)">L.Gabrys</div>
<div class="c" style="left:121.50px;top:468px;transform:scaleX(1.0884)">file3.agd</div>
<div class="c" style="left:191.50px;top:468px;transform:scaleX(0.9671)">LYN2D49080105</div>
<div class="c" style="left:367.00px;top:468px;transform:scaleX(0.9683)">60</div>
<div class="c" style="left:412.00px;top:468px;transform:scaleX(0.9683)">154</div>
<div class="c" style="left:450.00px;top:468px;transform:scaleX(0.9683)">31</div>
<div class="c" style="left:468.50px;top:468px;transform:scaleX(1.1361)">Male</div>
<div class="c" style="left:521.50px;top:468px;transform:scaleX(1.0635)">Cole-Kripke</div>
<div class="c" style="left:672.50px;top:468px;transform:scaleX(1.0697)">Tudor-Locke Default</div>
<div class="c" style="left:902.98px;top:468px;transform:scaleX(1.0325)">12/7/2011 20:55</div>
<div class="c" style="left:1020.98px;top:468px;transform:scaleX(1.0379)">12/8/2011 8:16</div>
<div class="c" style="left:1138.21px;top:468px;transform:scaleX(0.9756)">98.091</div>
<div class="c" style="left:1191.98px;top:468px;transform:scaleX(1.0325)">12/7/2011 20:55</div>
<div class="c" style="left:1335.00px;top:468px;transform:scaleX(0.9683)">0</div>
<div class="c" style="left:1432.00px;top:468px;transform:scaleX(0.9683)">681</div>
<div class="c" style="left:1485.00px;top:468px;transform:scaleX(0.9683)">13</div>
<div class="c" style="left:1647.00px;top:468px;transform:scaleX(0.9683)">3</div>
<div class="c" style="left:1846.21px;top:468px;transform:scaleX(0.9797)">4.33</div>
<div class="c" style="left:27.50px;top:488px;transform:scaleX(0.9956)">L.Gabrys</div>
<div class="c" style="left:121.50px;top:488px;transform:scaleX(1.0884)">file3.agd</div>
<div class="c" style="left:191.50px;top:488px;transform:scaleX(0.9671)">LYN2D49080105</div>
<div class="c" style="left:367.00px;top:488px;transform:scaleX(0.9683)">60</div>
<div class="c" style="left:412.00px;top:488px;transform:scaleX(0.9683)">154</div>
<div class="c" style="left:450.00px;top:488px;transform:scaleX(0.9683)">31</div>
<div class="c" style="left:468.50px;top:488px;transform:scaleX(1.1361)">Male</div>
<div class="c" style="left:521.50px;top:488px;transform:scaleX(1.0635)">Cole-Kripke</div>
<div class="c" style="left:672.50px;top:488px;transform:scaleX(1.0697)">Tudor-Locke Default</div>
<div class="c" style="left:902.98px;top:488px;transform:scaleX(1.0325)">12/8/2011 15:17</div>
<div class="c" style="left:1013.98px;top:488px;transform:scaleX(1.0325)">12/8/2011 18:14</div>
<div class="c" style="left:1138.21px;top:488px;transform:scaleX(0.9756)">91.525</div>
<div class="c" style="left:1191.98px;top:488px;transform:scaleX(1.0325)">12/8/2011 15:17</div>
<div class="c" style="left:1335.00px;top:488px;transform:scaleX(0.9683)">0</div>
<div class="c" style="left:1432.00px;top:488px;transform:scaleX(0.9683)">177</div>
<div class="c" style="left:1485.00px;top:488px;transform:scaleX(0.9683)">15</div>
<div class="c" style="left:1647.00px;top:488px;transform:scaleX(0.9683)">5</div>
<div class="c" style="left:1864.00px;top:488px;transform:scaleX(0.9683)">3</div>
<div class="c" style="left:27.50px;top:508px;transform:scaleX(0.9956)">L.Gabrys</div>
<div class="c" style="left:121.50px;top:508px;transform:scaleX(1.0884)">file3.agd</div>
<div class="c" style="left:191.50px;top:508px;transform:scaleX(0.9671)">LYN2D49080105</div>
<div class="c" style="left:367.00px;top:508px;transform:scaleX(0.9683)">60</div>
<div class="c" style="left:412.00px;top:508px;transform:scaleX(0.9683)">154</div>
<div class="c" style="left:450.00px;top:508px;transform:scaleX(0.9683)">31</div>
<div class="c" style="left:468.50px;top:508px;transform:scaleX(1.1361)">Male</div>
<div class="c" style="left:521.50px;top:508px;transform:scaleX(1.0635)">Cole-Kripke</div>
<div class="c" style="left:672.50px;top:508px;transform:scaleX(1.0697)">Tudor-Locke Default</div>
<div class="c" style="left:902.98px;top:508px;transform:scaleX(1.0325)">12/8/2011 20:50</div>
<div class="c" style="left:1020.98px;top:508px;transform:scaleX(1.0379)">12/9/2011 7:07</div>
<div class="c" style="left:1138.21px;top:508px;transform:scaleX(0.9756)">98.541</div>
<div class="c" style="left:1191.98px;top:508px;transform:scaleX(1.0325)">12/8/2011 20:50</div>
<div class="c" style="left:1335.00px;top:508px;transform:scaleX(0.9683)">0</div>
<div class="c" style="left:1432.00px;top:508px;transform:scaleX(0.9683)">617</div>
<div class="c" style="left:1492.00px;top:508px;transform:scaleX(0.9683)">9</div>
<div class="c" style="left:1647.00px;top:508px;transform:scaleX(0.9683)">3</div>
<div class="c" style="left:1864.00px;top:508px;transform:scaleX(0.9683)">3</div>
<div class="c" style="left:27.50px;top:528px;transform:scaleX(0.9956)">L.Gabrys</div>
<div class="c" style="left:121.50px;top:528px;transform:scaleX(1.0884)">file3.agd</div>
<div class="c" style="left:191.50px;top:528px;transform:scaleX(0.9671)">LYN2D49080105</div>
<div class="c" style="left:367.00px;top:528px;transform:scaleX(0.9683)">60</div>
<div class="c" style="left:412.00px;top:528px;transform:scaleX(0.9683)">154</div>
<div class="c" style="left:450.00px;top:528px;transform:scaleX(0.9683)">31</div>
<div class="c" style="left:468.50px;top:528px;transform:scaleX(1.1361)">Male</div>
<div class="c" style="left:521.50px;top:528px;transform:scaleX(1.0635)">Cole-Kripke</div>
<div class="c" style="left:672.50px;top:528px;transform:scaleX(1.0697)">Tudor-Locke Default</div>
<div class="c" style="left:902.98px;top:528px;transform:scaleX(1.0325)">12/9/2011 15:00</div>
<div class="c" style="left:1013.98px;top:528px;transform:scaleX(1.0325)">12/9/2011 17:51</div>
<div class="c" style="left:1145.21px;top:528px;transform:scaleX(0.9772)">85.38</div>
<div class="c" style="left:1191.98px;top:528px;transform:scaleX(1.0325)">12/9/2011 15:00</div>
<div class="c" style="left:1335.00px;top:528px;transform:scaleX(0.9683)">0</div>
<div class="c" style="left:1432.00px;top:528px;transform:scaleX(0.9683)">171</div>
<div class="c" style="left:1485.00px;top:528px;transform:scaleX(0.9683)">25</div>
<div class="c" style="left:1647.00px;top:528px;transform:scaleX(0.9683)">5</div>
<div class="c" style="left:1864.00px;top:528px;transform:scaleX(0.9683)">5</div>
<div class="c" style="left:27.50px;top:548px;transform:scaleX(0.9956)">L.Gabrys</div>
<div class="c" style="left:121.50px;top:548px;transform:scaleX(1.0884)">file3.agd</div>
<div class="c" style="left:191.50px;top:548px;transform:scaleX(0.9671)">LYN2D49080105</div>
<div class="c" style="left:367.00px;top:548px;transform:scaleX(0.9683)">60</div>
<div class="c" style="left:412.00px;top:548px;transform:scaleX(0.9683)">154</div>
<div class="c" style="left:450.00px;top:548px;transform:scaleX(0.9683)">31</div>
<div class="c" style="left:468.50px;top:548px;transform:scaleX(1.1361)">Male</div>
<div class="c" style="left:521.50px;top:548px;transform:scaleX(1.0635)">Cole-Kripke</div>
<div class="c" style="left:672.50px;top:548px;transform:scaleX(1.0697)">Tudor-Locke Default</div>
<div class="c" style="left:902.98px;top:548px;transform:scaleX(1.0325)">12/9/2011 20:58</div>
<div class="c" style="left:1013.98px;top:548px;transform:scaleX(1.0325)">12/10/2011 1:58</div>
<div class="c" style="left:1138.21px;top:548px;transform:scaleX(0.9756)">87.667</div>
<div class="c" style="left:1191.98px;top:548px;transform:scaleX(1.0325)">12/9/2011 20:58</div>
<div class="c" style="left:1335.00px;top:548px;transform:scaleX(0.9683)">0</div>
<div class="c" style="left:1432.00px;top:548px;transform:scaleX(0.9683)">300</div>
<div class="c" style="left:1485.00px;top:548px;transform:scaleX(0.9683)">37</div>
<div class="c" style="left:1647.00px;top:548px;transform:scaleX(0.9683)">5</div>
<div class="c" style="left:1853.21px;top:548px;transform:scaleX(0.9843)">7.4</div>
<div class="c" style="left:27.50px;top:568px;transform:scaleX(0.9956)">L.Gabrys</div>
<div class="c" style="left:121.50px;top:568px;transform:scaleX(1.0884)">file3.agd</div>
<div class="c" style="left:191.50px;top:568px;transform:scaleX(0.9671)">LYN2D49080105</div>
<div class="c" style="left:367.00px;top:568px;transform:scaleX(0.9683)">60</div>
<div class="c" style="left:412.00px;top:568px;transform:scaleX(0.9683)">154</div>
<div class="c" style="left:450.00px;top:568px;transform:scaleX(0.9683)">31</div>
<div class="c" style="left:468.50px;top:568px;transform:scaleX(1.1361)">Male</div>
<div class="c" style="left:521.50px;top:568px;transform:scaleX(1.0635)">Cole-Kripke</div>
<div class="c" style="left:672.50px;top:568px;transform:scaleX(1.0697)">Tudor-Locke Default</div>
<div class="c" style="left:902.98px;top:568px;transform:scaleX(1.0325)">12/10/2011 2:51</div>
<div class="c" style="left:1006.98px;top:568px;transform:scaleX(1.0278)">12/10/2011 12:45</div>
<div class="c" style="left:1156.00px;top:568px;transform:scaleX(0.9683)">100</div>
<div class="c" style="left:1191.98px;top:568px;transform:scaleX(1.0325)">12/10/2011 2:51</div>
<div class="c" style="left:1335.00px;top:568px;transform:scaleX(0.9683)">0</div>
<div class="c" style="left:1432.00px;top:568px;transform:scaleX(0.9683)">594</div>
<div class="c" style="left:1492.00px;top:568px;transform:scaleX(0.9683)">0</div>
<div class="c" style="left:1647.00px;top:568px;transform:scaleX(0.9683)">0</div>
<div class="c" style="left:1864.00px;top:568px;transform:scaleX(0.9683)">0</div>
<div class="c" style="left:27.50px;top:588px;transform:scaleX(0.9956)">L.Gabrys</div>
<div class="c" style="left:121.50px;top:588px;transform:scaleX(1.0884)">file3.agd</div>
<div class="c" style="left:191.50px;top:588px;transform:scaleX(0.9671)">LYN2D49080105</div>
<div class="c" style="left:367.00px;top:588px;transform:scaleX(0.9683)">60</div>
<div class="c" style="left:412.00px;top:588px;transform:scaleX(0.9683)">154</div>
<div class="c" style="left:450.00px;top:588px;transform:scaleX(0.9683)">31</div>
<div class="c" style="left:468.50px;top:588px;transform:scaleX(1.1361)">Male</div>
<div class="c" style="left:521.50px;top:588px;transform:scaleX(1.0635)">Cole-Kripke</div>
<div class="c" style="left:672.50px;top:588px;transform:scaleX(1.0697)">Tudor-Locke Default</div>
<div class="c" style="left:902.98px;top:588px;transform:scaleX(1.0433)">12/11/2011 0:24</div>
<div class="c" style="left:1006.98px;top:588px;transform:scaleX(1.0378)">12/11/2011 10:43</div>
<div class="c" style="left:1156.00px;top:588px;transform:scaleX(0.9683)">100</div>
<div class="c" style="left:1191.98px;top:588px;transform:scaleX(1.0433)">12/11/2011 0:24</div>
<div class="c" style="left:1335.00px;top:588px;transform:scaleX(0.9683)">0</div>
<div class="c" style="left:1432.00px;top:588px;transform:scaleX(0.9683)">619</div>
<div class="c" style="left:1492.00px;top:588px;transform:scaleX(0.9683)">0</div>
<div class="c" style="left:1647.00px;top:588px;transform:scaleX(0.9683)">0</div>
<div class="c" style="left:1864.00px;top:588px;transform:scaleX(0.9683)">0</div>
<div class="c" style="left:27.50px;top:608px;transform:scaleX(0.9956)">L.Gabrys</div>
<div class="c" style="left:121.50px;top:608px;transform:scaleX(1.0884)">file3.agd</div>
<div class="c" style="left:191.50px;top:608px;transform:scaleX(0.9671)">LYN2D49080105</div>
<div class="c" style="left:367.00px;top:608px;transform:scaleX(0.9683)">60</div>
<div class="c" style="left:412.00px;top:608px;transform:scaleX(0.9683)">154</div>
<div class="c" style="left:450.00px;top:608px;transform:scaleX(0.9683)">31</div>
<div class="c" style="left:468.50px;top:608px;transform:scaleX(1.1361)">Male</div>
<div class="c" style="left:521.50px;top:608px;transform:scaleX(1.0635)">Cole-Kripke</div>
<div class="c" style="left:672.50px;top:608px;transform:scaleX(1.0697)">Tudor-Locke Default</div>
<div class="c" style="left:895.98px;top:608px;transform:scaleX(1.0378)">12/11/2011 16:48</div>
<div class="c" style="left:1006.98px;top:608px;transform:scaleX(1.0378)">12/11/2011 21:41</div>
<div class="c" style="left:1138.21px;top:608px;transform:scaleX(0.9756)">95.222</div>
<div class="c" style="left:1184.98px;top:608px;transform:scaleX(1.0378)">12/11/2011 16:48</div>
<div class="c" style="left:1335.00px;top:608px;transform:scaleX(0.9683)">0</div>
<div class="c" style="left:1432.00px;top:608px;transform:scaleX(0.9683)">293</div>
<div class="c" style="left:1485.00px;top:608px;transform:scaleX(0.9683)">14</div>
<div class="c" style="left:1647.00px;top:608px;transform:scaleX(0.9683)">3</div>
<div class="c" style="left:1846.21px;top:608px;transform:scaleX(0.9797)">4.67</div>
<div class="c" style="left:27.50px;top:628px;transform:scaleX(0.9956)">L.Gabrys</div>
<div class="c" style="left:121.50px;top:628px;transform:scaleX(1.0884)">file3.agd</div>
<div class="c" style="left:191.50px;top:628px;transform:scaleX(0.9671)">LYN2D49080105</div>
<div class="c" style="left:367.00px;top:628px;transform:scaleX(0.9683)">60</div>
<div class="c" style="left:412.00px;top:628px;transform:scaleX(0.9683)">154</div>
<div class="c" style="left:450.00px;top:628px;transform:scaleX(0.9683)">31</div>
<div class="c" style="left:468.50px;top:628px;transform:scaleX(1.1361)">Male</div>
<div class="c" style="left:521.50px;top:628px;transform:scaleX(1.0635)">Cole-Kripke</div>
<div class="c" style="left:672.50px;top:628px;transform:scaleX(1.0697)">Tudor-Locke Default</div>
<div class="c" style="left:895.98px;top:628px;transform:scaleX(1.0378)">12/11/2011 22:50</div>
<div class="c" style="left:1013.98px;top:628px;transform:scaleX(1.0325)">12/12/2011 8:23</div>
<div class="c" style="left:1138.21px;top:628px;transform:scaleX(0.9756)">98.778</div>
<div class="c" style="left:1184.98px;top:628px;transform:scaleX(1.0378)">12/11/2011 22:50</div>
<div class="c" style="left:1335.00px;top:628px;transform:scaleX(0.9683)">0</div>
<div class="c" style="left:1432.00px;top:628px;transform:scaleX(0.9683)">573</div>
<div class="c" style="left:1492.00px;top:628px;transform:scaleX(0.9683)">7</div>
<div class="c" style="left:1647.00px;top:628px;transform:scaleX(0.9683)">1</div>
<div class="c" style="left:1864.00px;top:628px;transform:scaleX(0.9683)">7</div>
<div class="c" style="left:27.50px;top:648px;transform:scaleX(0.9956)">L.Gabrys</div>
<div class="c" style="left:121.50px;top:648px;transform:scaleX(1.0884)">file3.agd</div>
<div class="c" style="left:191.50px;top:648px;transform:scaleX(0.9671)">LYN2D49080105</div>
<div class="c" style="left:367.00px;top:648px;transform:scaleX(0.9683)">60</div>
<div class="c" style="left:412.00px;top:648px;transform:scaleX(0.9683)">154</div>
<div class="c" style="left:450.00px;top:648px;transform:scaleX(0.9683)">31</div>
<div class="c" style="left:468.50px;top:648px;transform:scaleX(1.1361)">Male</div>
<div class="c" style="left:521.50px;top:648px;transform:scaleX(1.0635)">Cole-Kripke</div>
<div class="c" style="left:672.50px;top:648px;transform:scaleX(1.0697)">Tudor-Locke Default</div>
<div class="c" style="left:895.98px;top:648px;transform:scaleX(1.0378)">12/12/2011 12:11</div>
<div class="c" style="left:1006.98px;top:648px;transform:scaleX(1.0278)">12/12/2011 16:56</div>
<div class="c" style="left:1138.21px;top:648px;transform:scaleX(0.9756)">97.193</div>
<div class="c" style="left:1184.98px;top:648px;transform:scaleX(1.0378)">12/12/2011 12:11</div>
<div class="c" style="left:1335.00px;top:648px;transform:scaleX(0.9683)">0</div>
<div class="c" style="left:1432.00px;top:648px;transform:scaleX(0.9683)">285</div>
<div class="c" style="left:1492.00px;top:648px;transform:scaleX(0.9683)">8</div>
<div class="c" style="left:1647.00px;top:648px;transform:scaleX(0.9683)">4</div>
<div class="c" style="left:1864.00px;top:648px;transform:scaleX(0.9683)">2</div>
<div class="c" style="left:27.50px;top:668px;transform:scaleX(0.9956)">L.Gabrys</div>
<div class="c" style="left:121.50px;top:668px;transform:scaleX(1.0884)">file3.agd</div>
<div class="c" style="left:191.50px;top:668px;transform:scaleX(0.9671)">LYN2D49080105</div>
<div class="c" style="left:367.00px;top:668px;transform:scaleX(0.9683)">60</div>
<div class="c" style="left:412.00px;top:668px;transform:scaleX(0.9683)">154</div>
<div class="c" style="left:450.00px;top:668px;transform:scaleX(0.9683)">31</div>
<div class="c" style="left:468.50px;top:668px;transform:scaleX(1.1361)">Male</div>
<div class="c" style="left:521.50px;top:668px;transform:scaleX(1.0635)">Cole-Kripke</div>
<div class="c" style="left:672.50px;top:668px;transform:scaleX(1.0697)">Tudor-Locke Default</div>
<div class="c" style="left:895.98px;top:668px;transform:scaleX(1.0278)">12/12/2011 20:10</div>
<div class="c" style="left:1013.98px;top:668px;transform:scaleX(1.0325)">12/13/2011 8:06</div>
<div class="c" style="left:1138.21px;top:668px;transform:scaleX(0.9756)">93.017</div>
<div class="c" style="left:1184.98px;top:668px;transform:scaleX(1.0278)">12/12/2011 20:10</div>
<div class="c" style="left:1335.00px;top:668px;transform:scaleX(0.9683)">0</div>
<div class="c" style="left:1432.00px;top:668px;transform:scaleX(0.9683)">716</div>
<div class="c" style="left:1485.00px;top:668px;transform:scaleX(0.9683)">50</div>
<div class="c" style="left:1640.00px;top:668px;transform:scaleX(0.9683)">17</div>
<div class="c" style="left:1846.21px;top:668px;transform:scaleX(0.9797)">2.94</div>
<div class="c" style="left:27.50px;top:688px;transform:scaleX(0.9956)">L.Gabrys</div>
<div class="c" style="left:121.50px;top:688px;transform:scaleX(1.0884)">file3.agd</div>
<div class="c" style="left:191.50px;top:688px;transform:scaleX(0.9671)">LYN2D49080105</div>
<div class="c" style="left:367.00px;top:688px;transform:scaleX(0.9683)">60</div>
<div class="c" style="left:412.00px;top:688px;transform:scaleX(0.9683)">154</div>
<div class="c" style="left:450.00px;top:688px;transform:scaleX(0.9683)">31</div>
<div class="c" style="left:468.50px;top:688px;transform:scaleX(1.1361)">Male</div>
<div class="c" style="left:521.50px;top:688px;transform:scaleX(1.0635)">Cole-Kripke</div>
<div class="c" style="left:672.50px;top:688px;transform:scaleX(1.0697)">Tudor-Locke Default</div>
<div class="c" style="left:902.98px;top:688px;transform:scaleX(1.0325)">12/13/2011 9:15</div>
<div class="c" style="left:1006.98px;top:688px;transform:scaleX(1.0278)">12/13/2011 12:02</div>
<div class="c" style="left:1145.21px;top:688px;transform:scaleX(0.9772)">95.21</div>
<div class="c" style="left:1191.98px;top:688px;transform:scaleX(1.0325)">12/13/2011 9:15</div>
<div class="c" style="left:1335.00px;top:688px;transform:scaleX(0.9683)">0</div>
<div class="c" style="left:1432.00px;top:688px;transform:scaleX(0.9683)">167</div>
<div class="c" style="left:1492.00px;top:688px;transform:scaleX(0.9683)">8</div>
<div class="c" style="left:1647.00px;top:688px;transform:scaleX(0.9683)">5</div>
<div class="c" style="left:1853.21px;top:688px;transform:scaleX(0.9843)">1.6</div>
<div class="a" style="left:24px;top:145px;width:97px;height:2px;background:#217346"></div>
<div class="a" style="left:24px;top:145px;width:2px;height:23px;background:#217346"></div>
<div class="a" style="left:24px;top:166px;width:92px;height:2px;background:#217346"></div>
<div class="a" style="left:119px;top:145px;width:2px;height:18px;background:#217346"></div>
<div class="a" style="left:116px;top:163px;width:7px;height:7px;background:#fff"></div>
<div class="a" style="left:117px;top:164px;width:5px;height:5px;background:#217346"></div>
</body></html>
